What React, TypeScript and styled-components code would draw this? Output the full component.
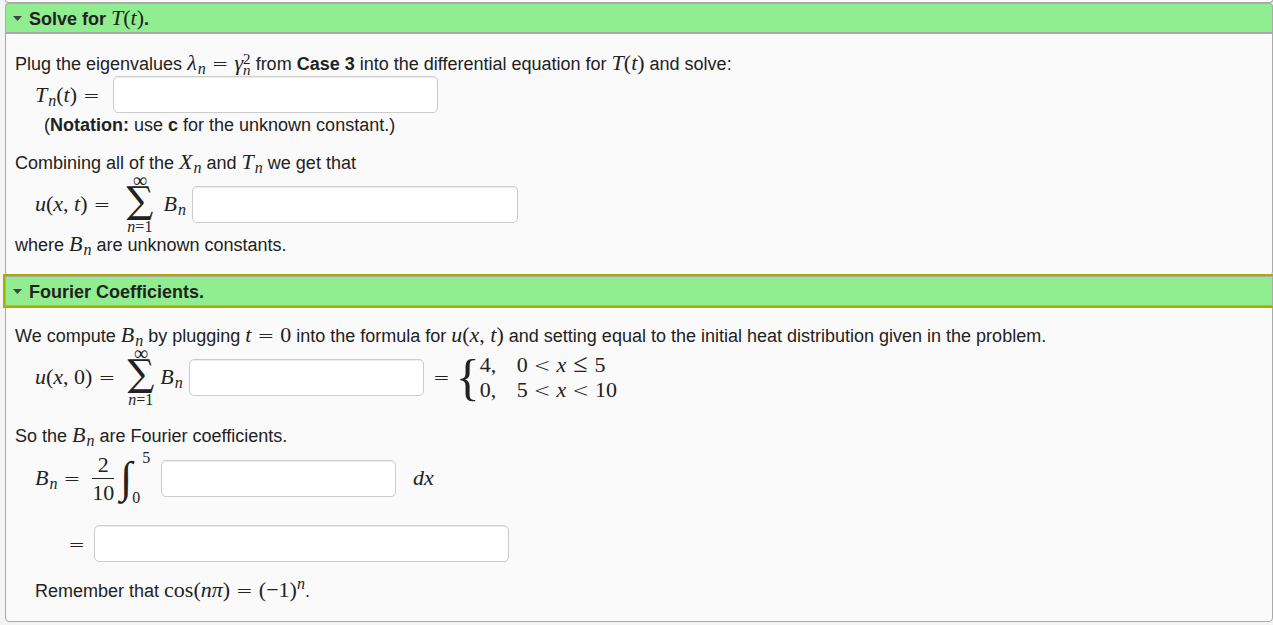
import React from "react";
import styled, { createGlobalStyle } from "styled-components";

const GlobalStyle = createGlobalStyle`
  * { box-sizing: border-box; }
  body {
    margin: 0;
    background: #f4f4f4;
    color: #222;
    font-family: "Liberation Sans", Arial, sans-serif;
    font-size: 18px;
    line-height: 24px;
  }
`;

const Page = styled.main`
  padding: 0 0 3px 5px;
`;

const PreviousPanel = styled.div`
  height: 3px;
  background: #fafafa;
  border: 1px solid #aaa;
  border-top: 0;
  border-radius: 0 0 4px 4px;
`;

const Panel = styled.details`
  border: 1px solid #aaa;
  border-radius: 4px;
  background: #fafafa;
`;

const PanelTitle = styled.summary<{ $focused?: boolean }>`
  display: flex;
  align-items: center;
  gap: 7px;
  height: ${(p) => (p.$focused ? 30 : 31)}px;
  margin: -1px -1px 0;
  padding: 2px 7px 0;
  border: 1px solid #aaa;
  border-bottom-width: ${(p) => (p.$focused ? 1 : 2)}px;
  border-radius: ${(p) => (p.$focused ? "0" : "4px 4px 0 0")};
  background: #90ee90;
  font-weight: bold;
  list-style: none;
  cursor: pointer;
  outline: ${(p) => (p.$focused ? "2px solid #aaaa00" : "none")};
  &::-webkit-details-marker { display: none; }
`;

const PanelBody = styled.div`
  padding: 18px 9px;
`;

const Line = styled.p<{ $indent?: number; $before?: number }>`
  margin: ${(p) => p.$before ?? 0}px 0 0 ${(p) => p.$indent ?? 0}px;
  height: 24px;
  white-space: nowrap;
`;

const Equation = styled.div<{ $height: number; $before?: number }>`
  display: flex;
  align-items: center;
  height: ${(p) => p.$height}px;
  margin: ${(p) => p.$before ?? 0}px 0 0 20px;
`;

const Lead = styled.label<{ $width: number; $gap?: number; $end?: boolean }>`
  display: flex;
  align-items: center;
  justify-content: ${(p) => (p.$end ? "flex-end" : "flex-start")};
  gap: ${(p) => p.$gap ?? 4}px;
  width: ${(p) => p.$width}px;
  padding-right: ${(p) => (p.$end ? 3 : 0)}px;
`;

const Answer = styled.input<{ $width: number }>`
  width: ${(p) => p.$width}px;
  height: 37px;
  padding: 4px 6px;
  border: 1px solid #ccc;
  border-radius: 5px;
  background: #fff;
  box-shadow: inset 0 1px 1px rgba(0, 0, 0, 0.075);
  font: inherit;
`;

const Maths = styled.span`
  font-family: "Liberation Serif", "Times New Roman", serif;
  font-size: 22px;
  font-weight: normal;
  line-height: 20px;
  white-space: nowrap;
`;

const Sub = styled.sub`
  font-size: 16px;
  font-style: italic;
  line-height: 0;
  vertical-align: -4px;
  margin-left: 1px;
`;

const Sup = styled.sup`
  font-size: 16px;
  font-style: italic;
  line-height: 0;
`;

const Relation = styled.span`
  font-family: "DejaVu Sans Light", "DejaVu Sans", sans-serif;
  font-weight: 200;
  font-size: 20px;
  line-height: 20px;
  margin: 0 6px;
`;

const OrEqual = styled.span`
  font-size: 26px;
  line-height: 20px;
  margin: 0 7px;
`;

const Scripts = styled.span`
  display: inline-flex;
  flex-direction: column;
  font-size: 15px;
  line-height: 11px;
  vertical-align: middle;
`;

const Limits = styled.span`
  display: flex;
  flex-direction: column;
  align-items: center;
  font-size: 16px;
  line-height: 12px;
`;

const Infinity = styled.span`
  font-size: 20px;
  line-height: 10px;
`;

const BigSum = styled.span`
  font-family: "DejaVu Math TeX Gyre", "Liberation Serif", serif;
  font-size: 32px;
  line-height: 36px;
`;

const Fraction = styled.span`
  display: flex;
  flex-direction: column;
  text-align: center;
  line-height: 27px;
`;

const Numerator = styled.span`
  padding: 0 1px;
  border-bottom: 1px solid #222;
`;

const Integral = styled.span`
  display: flex;
  align-items: center;
`;

const IntegralSign = styled.i`
  font-size: 44px;
  line-height: 50px;
`;

const Bounds = styled.span`
  display: flex;
  flex-direction: column;
  justify-content: space-between;
  height: 56px;
  font-size: 16px;
  line-height: 16px;
`;

const Upper = styled.span`
  padding-left: 10px;
`;

const Cases = styled(Maths)`
  display: flex;
  align-items: center;
  padding-left: 3px;
`;

const Brace = styled.span`
  font-size: 50px;
  line-height: 50px;
`;

const CaseGrid = styled.span`
  display: grid;
  grid-template-columns: 37px auto;
  line-height: 25px;
`;

const Differential = styled(Maths)`
  padding-left: 17px;
`;

const Arrow = () => (
  <svg width="9" height="6" viewBox="0 0 9 6" aria-hidden="true">
    <path d="M0 0h9L4.500 5z" fill="#444" />
  </svg>
);

const Eq = () => <Relation>=</Relation>;
const Indexed = ({ name }: { name: string }) => (
  <Maths><i>{name}</i><Sub>n</Sub></Maths>
);
const Sum = () => (
  <Limits>
    <Infinity>∞</Infinity>
    <BigSum>∑</BigSum>
    <span><i>n</i>=1</span>
  </Limits>
);

export default function App() {
  return (
    <>
      <GlobalStyle />
      <Page>
        <PreviousPanel />
        <Panel open>
          <PanelTitle>
            <Arrow />
            <span>Solve for <Maths><i>T</i>(<i>t</i>)</Maths>.</span>
          </PanelTitle>
          <PanelBody>
            <Line>
              Plug the eigenvalues{" "}
              <Maths>
                <i>λ</i><Sub>n</Sub><Eq /><i>γ</i>
                <Scripts><span>2</span><i>n</i></Scripts>
              </Maths>{" "}
              from <b>Case 3</b> into the differential equation for{" "}
              <Maths><i>T</i>(<i>t</i>)</Maths> and solve:
            </Line>
            <Equation $height={37}>
              <Lead htmlFor="t-solution" $width={78}>
                <Maths><i>T</i><Sub>n</Sub>(<i>t</i>)<Eq /></Maths>
              </Lead>
              <Answer id="t-solution" $width={325} />
            </Equation>
            <Line $indent={29}>
              (<b>Notation:</b> use <b>c</b> for the unknown constant.)
            </Line>
            <Line $before={14}>
              Combining all of the <Indexed name="X" /> and <Indexed name="T" /> we get that
            </Line>
            <Equation $height={58}>
              <Lead htmlFor="u-solution" $width={157} $gap={8}>
                <Maths><i>u</i>(<i>x</i>, <i>t</i>)<Eq /></Maths>
                <Maths><Sum /></Maths>
                <Indexed name="B" />
              </Lead>
              <Answer id="u-solution" $width={326} />
            </Equation>
            <Line>
              where <Indexed name="B" /> are unknown constants.
            </Line>
          </PanelBody>
        </Panel>
        <Panel open>
          <PanelTitle $focused>
            <Arrow />
            <span>Fourier Coefficients.</span>
          </PanelTitle>
          <PanelBody>
            <Line>
              We compute <Indexed name="B" /> by plugging{" "}
              <Maths><i>t</i><Eq />0</Maths> into the formula for{" "}
              <Maths><i>u</i>(<i>x</i>, <i>t</i>)</Maths> and setting equal to the initial heat
              distribution given in the problem.
            </Line>
            <Equation $height={58}>
              <Lead htmlFor="u-initial" $width={154}>
                <Maths><i>u</i>(<i>x</i>, 0)<Eq /></Maths>
                <Maths><Sum /></Maths>
                <Indexed name="B" />
              </Lead>
              <Answer id="u-initial" $width={235} />
              <Cases>
                <Eq />
                <Brace>{"{"}</Brace>
                <CaseGrid>
                  <span>4,</span>
                  <span>0<Relation>&lt;</Relation><i>x</i><OrEqual>≤</OrEqual>5</span>
                  <span>0,</span>
                  <span>5<Relation>&lt;</Relation><i>x</i><Relation>&lt;</Relation>10</span>
                </CaseGrid>
              </Cases>
            </Equation>
            <Line $before={18}>
              So the <Indexed name="B" /> are Fourier coefficients.
            </Line>
            <Equation $height={60}>
              <Lead htmlFor="integrand" $width={126} $gap={6}>
                <Maths><i>B</i><Sub>n</Sub><Eq /></Maths>
                <Maths>
                  <Fraction><Numerator>2</Numerator><span>10</span></Fraction>
                </Maths>
                <Maths>
                  <Integral>
                    <IntegralSign>∫</IntegralSign>
                    <Bounds><Upper>5</Upper><span>0</span></Bounds>
                  </Integral>
                </Maths>
              </Lead>
              <Answer id="integrand" $width={235} />
              <Differential><i>dx</i></Differential>
            </Equation>
            <Equation $height={37} $before={17}>
              <Lead htmlFor="coefficient" $width={59} $end>
                <Maths><Eq /></Maths>
              </Lead>
              <Answer id="coefficient" $width={415} />
            </Equation>
            <Line $indent={20} $before={17}>
              Remember that{" "}
              <Maths>cos(<i>nπ</i>)<Eq />(−1)<Sup>n</Sup></Maths>.
            </Line>
          </PanelBody>
        </Panel>
      </Page>
    </>
  );
}
